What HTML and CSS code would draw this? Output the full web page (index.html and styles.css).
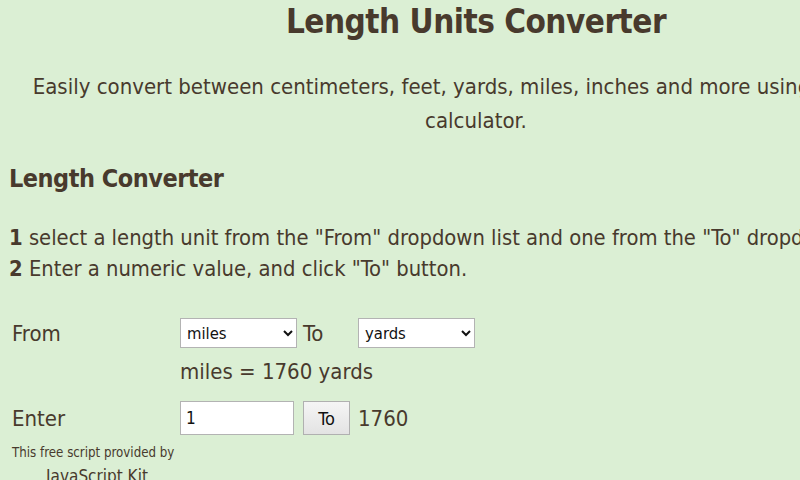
FILE: index.html
```html
<!DOCTYPE html>
<html lang="en">
  <head>
    <meta charset="UTF-8" />
    <meta name="viewport" content="width=device-width, initial-scale=1.0" />
    <title>Length Units Converter</title>
    <link rel="stylesheet" href="styles.css">
  </head>
  <body>
    <div class="page">
      <h1>Length Units Converter</h1>
      <p class="intro">Easily convert between centimeters, feet, yards, miles, inches and more using this online calculator.</p>

      <h2>Length Converter</h2>
      <p class="steps">
        <b>1</b> select a length unit from the "From" dropdown list and one from the "To" dropdown list.<br />
        <b>2</b> Enter a numeric value, and click "To" button.
      </p>

      <div class="converter">
        <div class="label">From</div>
        <div class="row">
          <select class="unit">
            <option>miles</option>
          </select>
          <span class="to-word">To</span>
          <select class="unit">
            <option>yards</option>
          </select>
        </div>

        <div></div>
        <div class="ratio">miles = 1760 yards</div>

        <div class="label">Enter</div>
        <div class="row">
          <input class="value" type="text" value="1" />
          <button class="to-button">To</button>
          <span class="result">1760</span>
        </div>
      </div>

      <div class="credit">
        This free script provided by<br />
        <span>JavaScript Kit</span>
      </div>
    </div>
  </body>
</html>
```

FILE: styles.css
```css
html {
  overflow: hidden;
}
body {
  margin: 0;
  background: #dbefd4;
  color: #483a2d;
  font-family: "DejaVu Sans Condensed", "DejaVu Sans", sans-serif;
  font-stretch: condensed;
}
.page {
  width: 952px;
}
h1 {
  margin: 0;
  text-align: center;
  font-size: 33px;
  line-height: 44px;
  letter-spacing: -0.5px;
}
.intro {
  margin: 26px 20px 0;
  text-align: center;
  font-size: 22px;
  line-height: 34px;
}
h2 {
  margin: 25px 0 0 9px;
  font-size: 25px;
  line-height: 32px;
  letter-spacing: -0.5px;
}
.steps {
  margin: 27px 0 0 9px;
  font-size: 21.8px;
  line-height: 31px;
  white-space: nowrap;
}
.converter {
  display: grid;
  grid-template-columns: 168px auto;
  margin: 34px 0 0 12px;
  align-items: center;
}
.label {
  font-size: 22px;
}
.row {
  display: flex;
  align-items: center;
}
.unit {
  width: 117px;
  height: 30px;
  padding-left: 2px;
  background: #fff;
  border: 1px solid #b3b3b3;
  border-radius: 0;
  font-family: "DejaVu Sans Condensed", "DejaVu Sans", sans-serif;
  font-stretch: condensed;
  font-size: 16.5px;
  color: #111;
}
.to-word {
  width: 55px;
  padding-left: 6px;
  font-size: 22px;
}
.ratio {
  padding: 9px 0 14px;
  font-size: 22px;
  line-height: 30px;
}
.value {
  width: 114px;
  height: 34px;
  box-sizing: border-box;
  padding: 0 5px;
  background: #fff;
  border: 1px solid #b3b3b3;
  font-family: "DejaVu Sans Condensed", "DejaVu Sans", sans-serif;
  font-stretch: condensed;
  font-size: 17px;
  color: #111;
}
.to-button {
  margin-left: 9px;
  width: 47px;
  height: 34px;
  padding: 0;
  background: linear-gradient(#f5f5f5, #e3e3e3);
  border: 1px solid #b0b0b0;
  border-radius: 0;
  font-family: "DejaVu Sans Condensed", "DejaVu Sans", sans-serif;
  font-stretch: condensed;
  font-size: 18px;
  color: #111;
}
.result {
  margin-left: 8px;
  font-size: 22px;
}
.credit {
  margin: 8px 0 0 12px;
  width: 170px;
  font-size: 13.2px;
  line-height: 20px;
}
.credit span {
  display: block;
  text-align: center;
  font-size: 17px;
  line-height: 26px;
}
```
